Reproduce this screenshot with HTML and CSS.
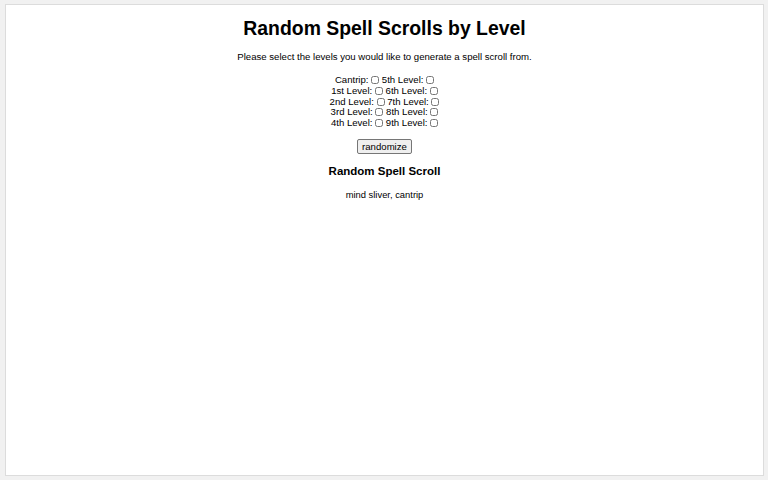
FILE: index.html
```html
<!DOCTYPE html>
<html>
<head>
<meta charset="utf-8">
<title>Random Spell Scrolls by Level</title>
<link rel="stylesheet" href="styles.css">
</head>
<body>
<div class="card">
  <h1 class="title">Random Spell Scrolls by Level</h1>
  <p class="intro">Please select the levels you would like to generate a spell scroll from.</p>
  <form class="levels">
    <div class="row"><label>Cantrip: <input type="checkbox"></label> <label>5th Level: <input type="checkbox"></label></div>
    <div class="row"><label>1st Level: <input type="checkbox"></label> <label>6th Level: <input type="checkbox"></label></div>
    <div class="row"><label>2nd Level: <input type="checkbox"></label> <label>7th Level: <input type="checkbox"></label></div>
    <div class="row"><label>3rd Level: <input type="checkbox"></label> <label>8th Level: <input type="checkbox"></label></div>
    <div class="row"><label>4th Level: <input type="checkbox"></label> <label>9th Level: <input type="checkbox"></label></div>
    <button type="button" class="go">randomize</button>
  </form>
  <h3 class="result-title">Random Spell Scroll</h3>
  <p class="result">mind sliver, cantrip</p>
</div>
</body>
</html>
```
FILE: styles.css
```css
html, body {
  height: 100%;
}
body {
  margin: 0;
  box-sizing: border-box;
  padding: 4px 4px 4px 5px;
  background: #f1f1f1;
  font-family: "Liberation Sans", Arial, sans-serif;
  color: #000;
}
.card {
  box-sizing: border-box;
  height: 100%;
  background: #fff;
  border: 1px solid #dcdcdc;
  text-align: center;
  padding-top: 11px;
}
.title {
  margin: 0;
  font-size: 19.4px;
  font-weight: bold;
  line-height: 24px;
}
.intro {
  margin: 11px 0 0;
  font-size: 9.6px;
  line-height: 12px;
}
.levels {
  margin-top: 12px;
  font-size: 9.6px;
}
.row {
  line-height: 10.75px;
  height: 10.75px;
}
.row input {
  width: 8px;
  height: 8px;
  margin: 0;
  vertical-align: -1px;
}
.go {
  margin-top: 10px;
  font: 9.6px "Liberation Sans", Arial, sans-serif;
  padding: 1px 4px;
  background: #efefef;
  border: 1px solid #767676;
  border-radius: 2px;
}
.result-title {
  margin: 10px 0 0;
  font-size: 11.5px;
  line-height: 14px;
}
.result {
  margin: 11px 0 0;
  font-size: 9.4px;
  line-height: 12px;
}
```
